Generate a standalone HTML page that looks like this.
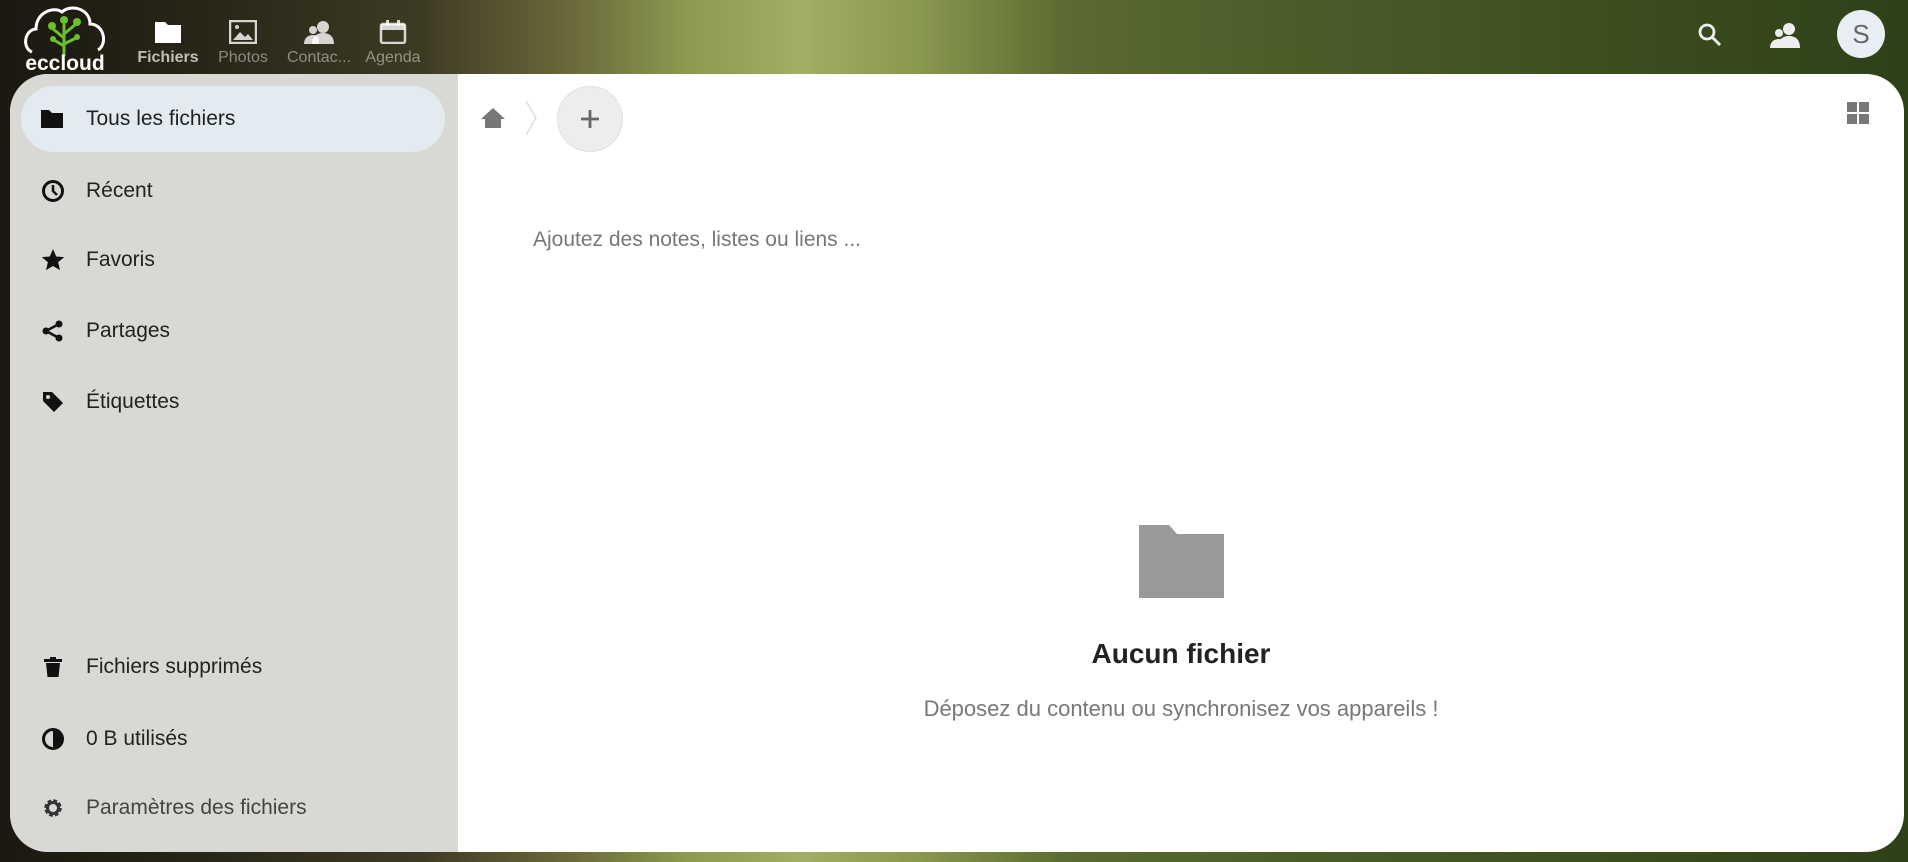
<!DOCTYPE html>
<html><head><meta charset="utf-8">
<style>
*{margin:0;padding:0;box-sizing:border-box}
body{width:1908px;height:862px;overflow:hidden;position:relative;font-family:"Liberation Sans",sans-serif;
background:linear-gradient(90deg,#1a1810 0%,#2a2818 12%,#3d3a24 22%,#6a6a3a 30%,#8c9a50 36%,#a3ad68 42%,#8a9850 48%,#5a6a30 56%,#4a5a28 70%,#3c4e1e 85%,#2e4018 100%);}
.main{position:absolute;left:10px;top:74px;width:1894px;height:778px;border-radius:38px;overflow:hidden;background:#fff}
.side{position:absolute;left:0;top:0;width:448px;height:100%;background:#d8d8d5}
.item{position:absolute;left:11px;width:424px;height:66px;display:flex;align-items:center;font-size:21px;color:#222}
.item.act{background:#e3ebf1;border-radius:33px}
.item svg{position:absolute;left:20px}
.item span{position:absolute;left:65px}
.nav{position:absolute;top:0;text-align:center;width:80px;font-size:16px;color:rgba(255,255,255,.45)}
.nav svg{display:block;margin:20px auto 5px}
</style></head><body>
<svg style="position:absolute;left:20px;top:2px" width="90" height="70" viewBox="0 0 90 70">
<path d="M12 50 C2 46 4 28 16 27 C16 10 34 4 42 10 C50 2 70 6 70 22 C84 22 88 42 78 48" fill="none" stroke="#fff" stroke-width="3"/>
<path d="M44 54 L44 22 M44 36 L32 26 M44 32 L56 22 M44 44 L34 38 M44 42 L56 36" stroke="#6cc02a" stroke-width="3" fill="none"/>
<circle cx="32" cy="24" r="4" fill="#6cc02a"/><circle cx="57" cy="20" r="4" fill="#6cc02a"/><circle cx="44" cy="18" r="4" fill="#6cc02a"/><circle cx="33" cy="37" r="3" fill="#6cc02a"/><circle cx="57" cy="35" r="3" fill="#6cc02a"/>
<text x="45" y="68" text-anchor="middle" font-family="Liberation Sans" font-size="21" font-weight="bold" fill="#fff">eccloud</text>
</svg>
<div class="nav" style="left:128px;color:rgba(255,255,255,.7);font-weight:bold"><svg width="28" height="24"><path d="M1 2h10l3 3h13v18H1z" fill="#fff"/></svg>Fichiers</div>
<div class="nav" style="left:203px"><svg width="28" height="24"><rect x="1" y="1" width="26" height="22" fill="none" stroke="rgba(255,255,255,.8)" stroke-width="2.5"/><path d="M4 20l7-8 5 5 3-3 5 6z" fill="rgba(255,255,255,.8)"/><circle cx="8" cy="7" r="2" fill="rgba(255,255,255,.8)"/></svg>Photos</div>
<div class="nav" style="left:279px"><svg width="30" height="24"><circle cx="19" cy="7" r="6" fill="rgba(255,255,255,.8)"/><path d="M8 24c0-8 5-11 11-11s11 3 11 11z" fill="rgba(255,255,255,.8)"/><circle cx="9" cy="10" r="4" fill="rgba(255,255,255,.8)"/><path d="M0 24c0-6 4-9 9-9s6 3 6 9z" fill="rgba(255,255,255,.8)"/></svg>Contac...</div>
<div class="nav" style="left:353px"><svg width="28" height="24"><rect x="2" y="4" width="24" height="19" rx="2" fill="none" stroke="rgba(255,255,255,.8)" stroke-width="2.5"/><rect x="2" y="4" width="24" height="6" fill="rgba(255,255,255,.8)"/><rect x="7" y="0" width="3" height="6" fill="rgba(255,255,255,.8)"/><rect x="18" y="0" width="3" height="6" fill="rgba(255,255,255,.8)"/></svg>Agenda</div>
<svg style="position:absolute;left:1697px;top:22px" width="26" height="26"><circle cx="10" cy="10" r="7" fill="none" stroke="#eee" stroke-width="2.8"/><path d="M15 15l8 8" stroke="#eee" stroke-width="3"/></svg>
<svg style="position:absolute;left:1770px;top:22px" width="30" height="26"><circle cx="19" cy="7" r="6" fill="#eee"/><path d="M8 26c0-9 5-12 11-12s11 3 11 12z" fill="#eee"/><circle cx="9" cy="11" r="4" fill="#eee"/><path d="M0 26c0-6 4-9 9-9s6 3 6 9z" fill="#eee"/></svg>
<div style="position:absolute;left:1837px;top:10px;width:48px;height:48px;border-radius:50%;background:#e8eef3;color:#666;font-size:26px;text-align:center;line-height:48px">S</div>

<div class="main">
<div class="side">
<div class="item act" style="top:12px"><svg width="22" height="20"><path d="M0 1h8l3 3h11v15H0z" fill="#111"/></svg><span>Tous les fichiers</span></div>
<div class="item" style="top:84px"><svg width="24" height="24"><circle cx="12" cy="12" r="9.5" fill="none" stroke="#111" stroke-width="3"/><path d="M12 6v6l4 4" stroke="#111" stroke-width="2.5" fill="none"/></svg><span>Récent</span></div>
<div class="item" style="top:153px"><svg width="24" height="24"><path d="M12 1l3.2 7.5 8 .6-6.1 5.2 1.9 7.8L12 18l-7 4.1 1.9-7.8L.8 9.1l8-.6z" fill="#111"/></svg><span>Favoris</span></div>
<div class="item" style="top:224px"><svg width="24" height="24"><circle cx="18" cy="5" r="3.5" fill="#111"/><circle cx="18" cy="19" r="3.5" fill="#111"/><circle cx="5" cy="12" r="3.5" fill="#111"/><path d="M18 5L5 12l13 7" stroke="#111" stroke-width="2.5" fill="none"/></svg><span>Partages</span></div>
<div class="item" style="top:295px"><svg width="24" height="24"><path d="M2 2h9l11 11-9 9L2 11z" fill="#111"/><circle cx="7" cy="7" r="2" fill="#d8d8d5"/></svg><span>Étiquettes</span></div>
<div class="item" style="top:560px"><svg width="24" height="24"><rect x="3" y="4" width="18" height="3" fill="#111"/><rect x="9" y="2" width="6" height="3" fill="#111"/><path d="M5 8h14l-1.5 14h-11z" fill="#111"/></svg><span>Fichiers supprimés</span></div>
<div class="item" style="top:632px"><svg width="24" height="24"><circle cx="12" cy="12" r="9.5" fill="none" stroke="#111" stroke-width="3"/><path d="M12 3a9 9 0 0 1 0 18z" fill="#111"/></svg><span>0 B utilisés</span></div>
<div class="item" style="top:701px;color:#444"><svg width="24" height="24"><circle cx="12" cy="12" r="7" fill="none" stroke="#333" stroke-width="3.5" stroke-dasharray="3.6 1.9"/><circle cx="12" cy="12" r="5.5" fill="none" stroke="#333" stroke-width="3"/></svg><span>Paramètres des fichiers</span></div>
</div>
<svg style="position:absolute;left:470px;top:32px" width="26" height="24"><path d="M13 2L1 13h4v9h16v-9h4z" fill="#777"/></svg>
<svg style="position:absolute;left:514px;top:26px" width="14" height="36"><path d="M2 1l10 17L2 35" fill="none" stroke="#ddd" stroke-width="1.5"/></svg>
<div style="position:absolute;left:547px;top:12px;width:66px;height:66px;border-radius:50%;background:#ededed;border:1px solid #e0e0e0"></div>
<svg style="position:absolute;left:569px;top:34px" width="22" height="22"><path d="M11 2v18M2 11h18" stroke="#666" stroke-width="2.8"/></svg>
<svg style="position:absolute;left:1837px;top:28px" width="22" height="22"><rect x="0" y="0" width="10" height="10" fill="#777"/><rect x="12" y="0" width="10" height="10" fill="#777"/><rect x="0" y="12" width="10" height="10" fill="#777"/><rect x="12" y="12" width="10" height="10" fill="#777"/></svg>
<div style="position:absolute;left:523px;top:154px;font-size:21px;color:#777">Ajoutez des notes, listes ou liens ...</div>
<svg style="position:absolute;left:1129px;top:451px" width="85" height="73"><path d="M0 0h30l8 9h47v64H0z" fill="#999"/></svg>
<div style="position:absolute;left:448px;right:0;top:564px;text-align:center;font-size:28px;font-weight:bold;color:#222">Aucun fichier</div>
<div style="position:absolute;left:448px;right:0;top:622px;text-align:center;font-size:22px;color:#777">Déposez du contenu ou synchronisez vos appareils !</div>
</div>
</body></html>
